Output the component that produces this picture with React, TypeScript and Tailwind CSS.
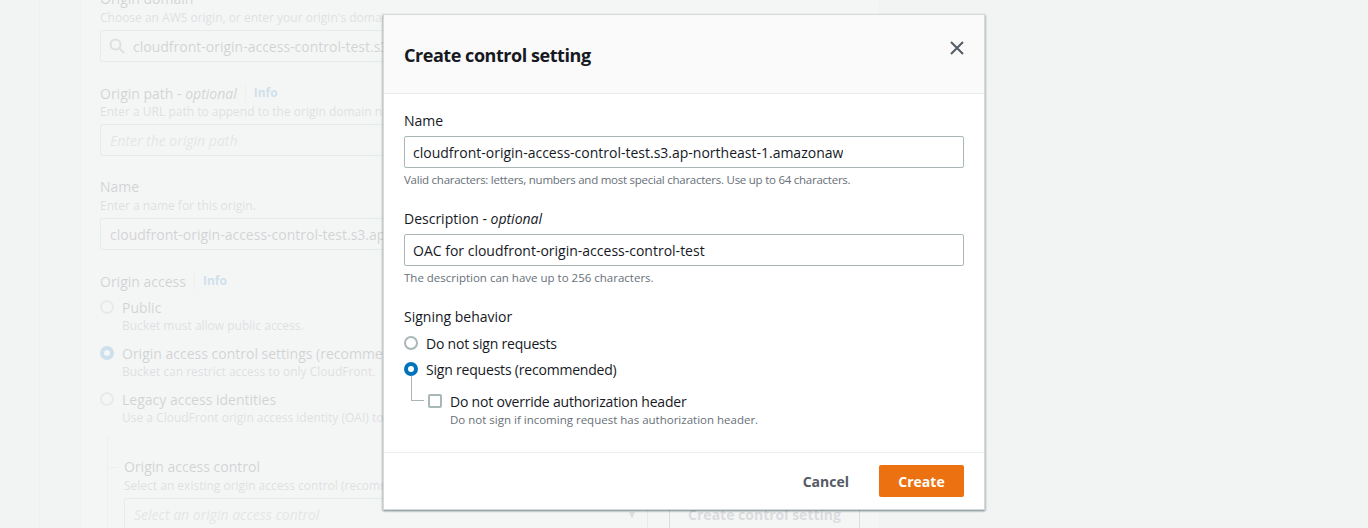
import React from "react";

const font = { fontFamily: '"Open Sans", "Liberation Sans", sans-serif' };

function Radio({ checked }: { checked?: boolean }) {
  return checked ? (
    <span className="block h-[14px] w-[14px] shrink-0 rounded-full border-[4px] border-[#0073bb] bg-white" />
  ) : (
    <span className="block h-[14px] w-[14px] shrink-0 rounded-full border-2 border-[#aab7b8] bg-white" />
  );
}

function InfoLink() {
  return (
    <>
      <span className="mx-2 h-[18px] w-px bg-[#d5dbdb]" />
      <span className="text-[12px] font-bold text-[#0073bb]">Info</span>
    </>
  );
}

function BgRadio({
  label,
  desc,
  checked,
}: {
  label: string;
  desc: string;
  checked?: boolean;
}) {
  return (
    <div>
      <div className="flex h-[22px] items-center gap-2">
        <Radio checked={checked} />
        <span className="text-[14px] text-[#16191f]">{label}</span>
      </div>
      <p className="pl-[22px] text-[12px] leading-4 text-[#687078] whitespace-nowrap">{desc}</p>
    </div>
  );
}

// page behind the dialog
function OriginForm() {
  return (
    <div className="flex h-full">
      <div className="w-[40px] shrink-0 border-r border-[#d5dbdb]" />
      <div className="w-[40px] shrink-0" />
      <div className="w-[800px] shrink-0 border-x border-[#eaeded] bg-white px-[19px]">
        <div className="-mt-[12px] flex flex-col">
          <p className="text-[14px] leading-[22px] text-[#16191f]">Origin domain</p>
          <p className="text-[12px] leading-4 text-[#687078]">
            Choose an AWS origin, or enter your origin's domain name.
          </p>
          <div className="mt-1 flex h-[32px] items-center gap-[8px] rounded-[2px] border border-[#aab7b8] px-[8px]">
            <svg width="16" height="16" viewBox="0 0 16 16" fill="none" stroke="#687078" strokeWidth="2">
              <circle cx="6.5" cy="6.5" r="5" />
              <path d="M10.5 10.5 15 15" />
            </svg>
            <span className="text-[14px] text-[#16191f]">
              cloudfront-origin-access-control-test.s3.ap-northeast-1.amazonaws.com
            </span>
          </div>

          <div className="mt-5 flex h-[22px] items-center">
            <span className="text-[14px] text-[#16191f]">
              Origin path - <i>optional</i>
            </span>
            <InfoLink />
          </div>
          <p className="text-[12px] leading-4 text-[#687078]">
            Enter a URL path to append to the origin domain name for origin requests.
          </p>
          <div className="mt-1 flex h-[32px] items-center rounded-[2px] border border-[#aab7b8] px-[9px]">
            <span className="text-[14px] italic text-[#879596]">Enter the origin path</span>
          </div>

          <p className="mt-5 text-[14px] leading-[22px] text-[#16191f]">Name</p>
          <p className="text-[12px] leading-4 text-[#687078]">Enter a name for this origin.</p>
          <div className="mt-1 flex h-[32px] items-center rounded-[2px] border border-[#aab7b8] px-[9px]">
            <span className="text-[14px] text-[#16191f]">
              cloudfront-origin-access-control-test.s3.ap-northeast-1.amazonaws.com
            </span>
          </div>

          <div className="mt-5 flex h-[22px] items-center">
            <span className="text-[14px] text-[#16191f]">Origin access</span>
            <InfoLink />
          </div>
          <div className="mt-1 flex flex-col gap-2">
            <BgRadio label="Public" desc="Bucket must allow public access." />
            <BgRadio
              checked
              label="Origin access control settings (recommended)"
              desc="Bucket can restrict access to only CloudFront."
            />
            <BgRadio
              label="Legacy access identities"
              desc="Use a CloudFront origin access identity (OAI) to access the S3 bucket."
            />
          </div>

          <div className="ml-[7px] mt-[10px] border-l border-[#d5dbdb] pl-[16px] pt-5">
            <div className="relative">
              <span className="absolute -left-[16px] top-[11px] h-px w-[10px] bg-[#d5dbdb]" />
              <p className="text-[14px] leading-[22px] text-[#16191f]">Origin access control</p>
            </div>
            <p className="text-[12px] leading-4 text-[#687078]">
              Select an existing origin access control (recommended) or create a new one.
            </p>
            <div className="mt-1 flex gap-[21px]">
              <div className="flex h-[32px] w-[524px] items-center justify-between rounded-[2px] border border-[#aab7b8] pl-[9px] pr-[10px]">
                <span className="text-[14px] italic text-[#879596]">Select an origin access control</span>
                <span className="text-[10px] text-[#545b64]">▼</span>
              </div>
              <div className="flex h-[32px] w-[191px] items-center justify-center rounded-[2px] border border-[#545b64]">
                <span className="text-[14px] font-bold text-[#545b64]">Create control setting</span>
              </div>
            </div>
          </div>
        </div>
      </div>
    </div>
  );
}

function ControlSettingDialog() {
  return (
    <div className="absolute left-[383px] top-[14px] flex w-[602px] flex-col border border-[#d5dbdb] bg-white shadow-[0_1px_2px_0_rgba(0,28,36,0.3),1px_1px_2px_0_rgba(0,28,36,0.15),-1px_1px_2px_0_rgba(0,28,36,0.15)]">
      <div className="flex h-[79px] items-start justify-between border-b border-[#eaeded] bg-[#fafafa] px-5 pt-[29px]">
        <h2 className="text-[18px] font-bold leading-[22px] tracking-[-0.45px] text-[#16191f]">
          Create control setting
        </h2>
        <svg className="-mr-[1px] -mt-[4px]" width="16" height="16" viewBox="0 0 16 16" fill="none" stroke="#545b64" strokeWidth="2">
          <path d="M2 2 14 14M14 2 2 14" />
        </svg>
      </div>

      <div className="flex flex-col px-5 pb-6 pt-4">
        <p className="text-[14px] leading-[22px] text-[#16191f]">Name</p>
        <div className="mt-1 flex h-[32px] items-center rounded-[2px] border border-[#aab7b8] px-[8px]">
          <span className="text-[14px] text-[#16191f] whitespace-nowrap overflow-hidden">
            cloudfront-origin-access-control-test.s3.ap-northeast-1.amazonaw
          </span>
        </div>
        <p className="mt-1 text-[11.5px] leading-4 tracking-[-0.25px] text-[#687078]">
          Valid characters: letters, numbers and most special characters. Use up to 64 characters.
        </p>

        <p className="mt-5 text-[14px] leading-[22px] text-[#16191f]">
          Description - <i>optional</i>
        </p>
        <div className="mt-1 flex h-[32px] items-center rounded-[2px] border border-[#aab7b8] px-[8px]">
          <span className="text-[14px] text-[#16191f]">OAC for cloudfront-origin-access-control-test</span>
        </div>
        <p className="mt-1 text-[11.5px] leading-4 text-[#687078]">The description can have up to 256 characters.</p>

        <p className="mt-5 text-[14px] leading-[22px] text-[#16191f]">Signing behavior</p>
        <div className="mt-1 flex h-[22px] items-center gap-2">
          <Radio />
          <span className="text-[14px] tracking-[-0.2px] text-[#16191f]">Do not sign requests</span>
        </div>
        <div className="mt-1 flex h-[22px] items-center gap-2">
          <Radio checked />
          <span className="text-[14px] tracking-[-0.2px] text-[#16191f]">Sign requests (recommended)</span>
        </div>
        <div className="mt-[10px] flex items-start">
          <span className="-mt-[14px] ml-[7px] mr-[4px] h-[25px] w-[13px] shrink-0 border-b border-l border-[#aab7b8]" />
          <div className="flex flex-col">
            <div className="flex h-[22px] items-center gap-2">
              <span className="block h-[14px] w-[14px] shrink-0 rounded-[2px] border-2 border-[#aab7b8] bg-white" />
              <span className="text-[14px] tracking-[-0.2px] text-[#16191f]">Do not override authorization header</span>
            </div>
            <p className="pl-[22px] text-[11.5px] leading-4 text-[#687078]">
              Do not sign if incoming request has authorization header.
            </p>
          </div>
        </div>
      </div>

      <div className="flex items-center justify-end gap-[10px] border-t border-[#eaeded] px-5 py-3">
        <button className="h-[32px] px-5 text-[14px] font-bold text-[#545b64]">Cancel</button>
        <button className="h-[32px] w-[85px] rounded-[2px] bg-[#ec7211] text-[14px] font-bold text-white">
          Create
        </button>
      </div>
    </div>
  );
}

export default function App() {
  return (
    <div className="relative h-[528px] w-[1368px] overflow-hidden bg-[#f2f3f3]" style={font}>
      <OriginForm />
      <div className="absolute inset-0 bg-[#f2f3f3]/85" />
      <ControlSettingDialog />
    </div>
  );
}
